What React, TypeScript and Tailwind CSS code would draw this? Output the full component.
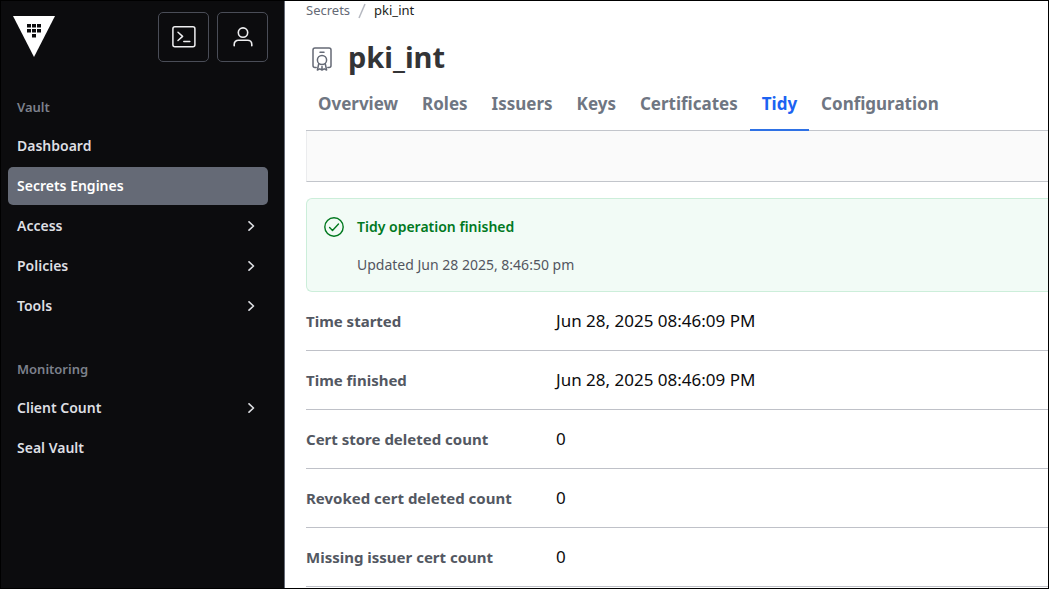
import { FC } from "react";
import clsx from "clsx";

interface NavItemProps {
  label: string;
  active?: boolean;
  expandable?: boolean;
}

const NavItem: FC<NavItemProps> = ({ label, active, expandable }) => {
  return (
    <li>
      <a
        href="#"
        className={clsx(
          "flex h-[38px] items-center justify-between rounded-[5px] pl-[9px] pr-3 text-sm font-semibold",
          active ? "bg-[#656a76] text-white" : "text-[#dedfe3]"
        )}
      >
        {label}
        {expandable && (
          <svg className="h-[10px] w-[10px]" viewBox="0 0 10 10" fill="none" stroke="currentColor" strokeWidth="1.6" strokeLinecap="round" strokeLinejoin="round">
            <path d="M3 0.8 7.500 5 3 9.2" />
          </svg>
        )}
      </a>
    </li>
  );
};

const VaultLogo = () => (
  <svg className="h-[41px] w-[42px]" viewBox="0 0 42 41" aria-label="Vault">
    <path d="M0 0h42L21 41z" fill="#fff" />
    <path
      fill="#0c0c0e"
      d="M14 8h4v3.4h-4zM19 8h4v3.4h-4zM24 8h4v3.4h-4zM14 13h4v3.4h-4zM19 13h4v3.4h-4zM24 13h4v3.4h-4zM19 18h4v3.4h-4z"
    />
  </svg>
);

const Sidebar = () => {
  return (
    <aside className="flex w-[284px] shrink-0 flex-col border-r border-[#656a76] bg-[#0c0c0e] pl-[7px] pr-4 pt-[11px]">
      <div className="flex justify-between pl-[5px]">
        <a href="#" className="pt-1">
          <VaultLogo />
        </a>
        <div className="flex gap-2">
          <button aria-label="Console" className="flex h-[50px] w-[51px] items-center justify-center rounded-[5px] border border-[#4a4d57] text-[#efeff1]">
            <svg className="h-6 w-6" viewBox="0 0 24 24" fill="none" stroke="currentColor" strokeWidth="1.5" strokeLinecap="round" strokeLinejoin="round">
              <rect x="0.9" y="1.8" width="22" height="20" rx="2" />
              <path d="M6 7.3 10.6 11.4 6 15.5M11.8 16.5h6" />
            </svg>
          </button>
          <button aria-label="User menu" className="flex h-[50px] w-[51px] items-center justify-center rounded-[5px] border border-[#4a4d57] text-[#efeff1]">
            <svg className="h-6 w-6" viewBox="0 0 24 24" fill="none" stroke="currentColor" strokeWidth="1.6" strokeLinecap="round" strokeLinejoin="round">
              <circle cx="12" cy="7.6" r="4.7" />
              <path d="M3.2 20.8v-1.4a4.2 4.2 0 0 1 4.2-4.2h9.2a4.2 4.2 0 0 1 4.2 4.2v1.4" />
            </svg>
          </button>
        </div>
      </div>

      <nav className="pt-[33px]">
        <h2 className="pl-[9px] pb-2 text-[13px] leading-6 font-semibold text-[#7d818c]">Vault</h2>
        <ul className="flex flex-col gap-[2px]">
          <NavItem label="Dashboard" />
          <NavItem label="Secrets Engines" active />
          <NavItem label="Access" expandable />
          <NavItem label="Policies" expandable />
          <NavItem label="Tools" expandable />
        </ul>
        <h2 className="pl-[9px] pb-2 pt-8 text-[13px] leading-6 font-semibold text-[#7d818c]">Monitoring</h2>
        <ul className="flex flex-col gap-[2px]">
          <NavItem label="Client Count" expandable />
          <NavItem label="Seal Vault" />
        </ul>
      </nav>
    </aside>
  );
};

const CertificateIcon = () => (
  <svg className="h-6 w-5" viewBox="0 0 20 24" fill="none" stroke="#656a76" strokeWidth="1.5" strokeLinecap="round" strokeLinejoin="round">
    <path d="M4.2 20.5H3a2 2 0 0 1-2-2V3a2 2 0 0 1 2-2h14a2 2 0 0 1 2 2v15.500a2 2 0 0 1-2 2h-1.200" />
    <path d="M8 5.200h4" />
    <circle cx="10" cy="13" r="4.600" />
    <path d="M6.800 16.500 5.400 23l2.400-1.200L10 23l2.200-1.200 2.400 1.200-1.400-6.500M10 19.500V23" />
  </svg>
);

const tabs = ["Overview", "Roles", "Issuers", "Keys", "Certificates", "Tidy", "Configuration"];

const rows = [
  { label: "Time started", value: "Jun 28, 2025 08:46:09 PM" },
  { label: "Time finished", value: "Jun 28, 2025 08:46:09 PM" },
  { label: "Cert store deleted count", value: "0" },
  { label: "Revoked cert deleted count", value: "0" },
  { label: "Missing issuer cert count", value: "0" },
];

const TidyPage = () => {
  return (
    <main className="min-w-0 flex-1 pl-[21px]">
      <nav aria-label="Breadcrumb" className="flex h-5 items-center text-[13px]">
        <a href="#" className="text-[#656a76]">Secrets</a>
        <svg className="mx-2 h-4 w-2" viewBox="0 0 8 16" stroke="#b5b8c0" strokeWidth="1.5">
          <path d="M1 15 7 1" />
        </svg>
        <span className="text-[#1c1d21]">pki_int</span>
      </nav>

      <h1 className="mt-4 flex h-10 items-center gap-4 pl-[6px] text-[29px] leading-10 font-bold text-[#333436]">
        <span className="pt-1">
          <CertificateIcon />
        </span>
        pki_int
      </h1>

      <nav className="flex h-[54px] border-b border-[#c2c5cb]">
        {tabs.map((tab) => (
          <a
            key={tab}
            href="#"
            className={clsx(
              "-mb-px flex items-center border-b-2 px-3 pt-px text-[17px] font-bold",
              tab === "Tidy" ? "border-[#2e71e5] text-[#1c63f2]" : "border-transparent text-[#6f7682]"
            )}
          >
            {tab}
          </a>
        ))}
      </nav>

      <div className="h-[51px] border-b border-l border-b-[#c2c5cb] border-l-[#ebecee] bg-[#fafafa]" />

      <section className="mt-4 flex h-[94px] gap-[13px] rounded-l-[6px] border border-r-0 border-[#cceeda] bg-[#f2fbf6] pl-[17px] pt-[18px]">
        <svg className="h-5 w-5 shrink-0" viewBox="0 0 20 20" fill="none" stroke="#00781e" strokeWidth="1.4" strokeLinecap="round" strokeLinejoin="round">
          <circle cx="10" cy="10" r="9.200" />
          <path d="m5.600 10.500 2.900 2.900 6-6.400" />
        </svg>
        <div>
          <p className="text-sm leading-5 font-semibold text-[#00781e]">Tidy operation finished</p>
          <p className="mt-[18px] text-sm leading-5 text-[#53565f]">Updated Jun 28 2025, 8:46:50 pm</p>
        </div>
      </section>

      <dl>
        {rows.map((row) => (
          <div key={row.label} className="flex h-[59px] items-center border-b border-[#bfc1c8]">
            <dt className="w-[250px] shrink-0 text-[15px] font-bold text-[#535862]">{row.label}</dt>
            <dd className="text-[17px] text-[#0c0c0e]">{row.value}</dd>
          </div>
        ))}
      </dl>
    </main>
  );
};

const App = () => {
  return (
    <div className="h-screen overflow-hidden bg-white pb-px pr-px font-['Noto_Sans','Open_Sans',sans-serif]">
      <div className="flex h-full overflow-hidden border border-black">
        <Sidebar />
        <TidyPage />
      </div>
    </div>
  );
};

export default App;
